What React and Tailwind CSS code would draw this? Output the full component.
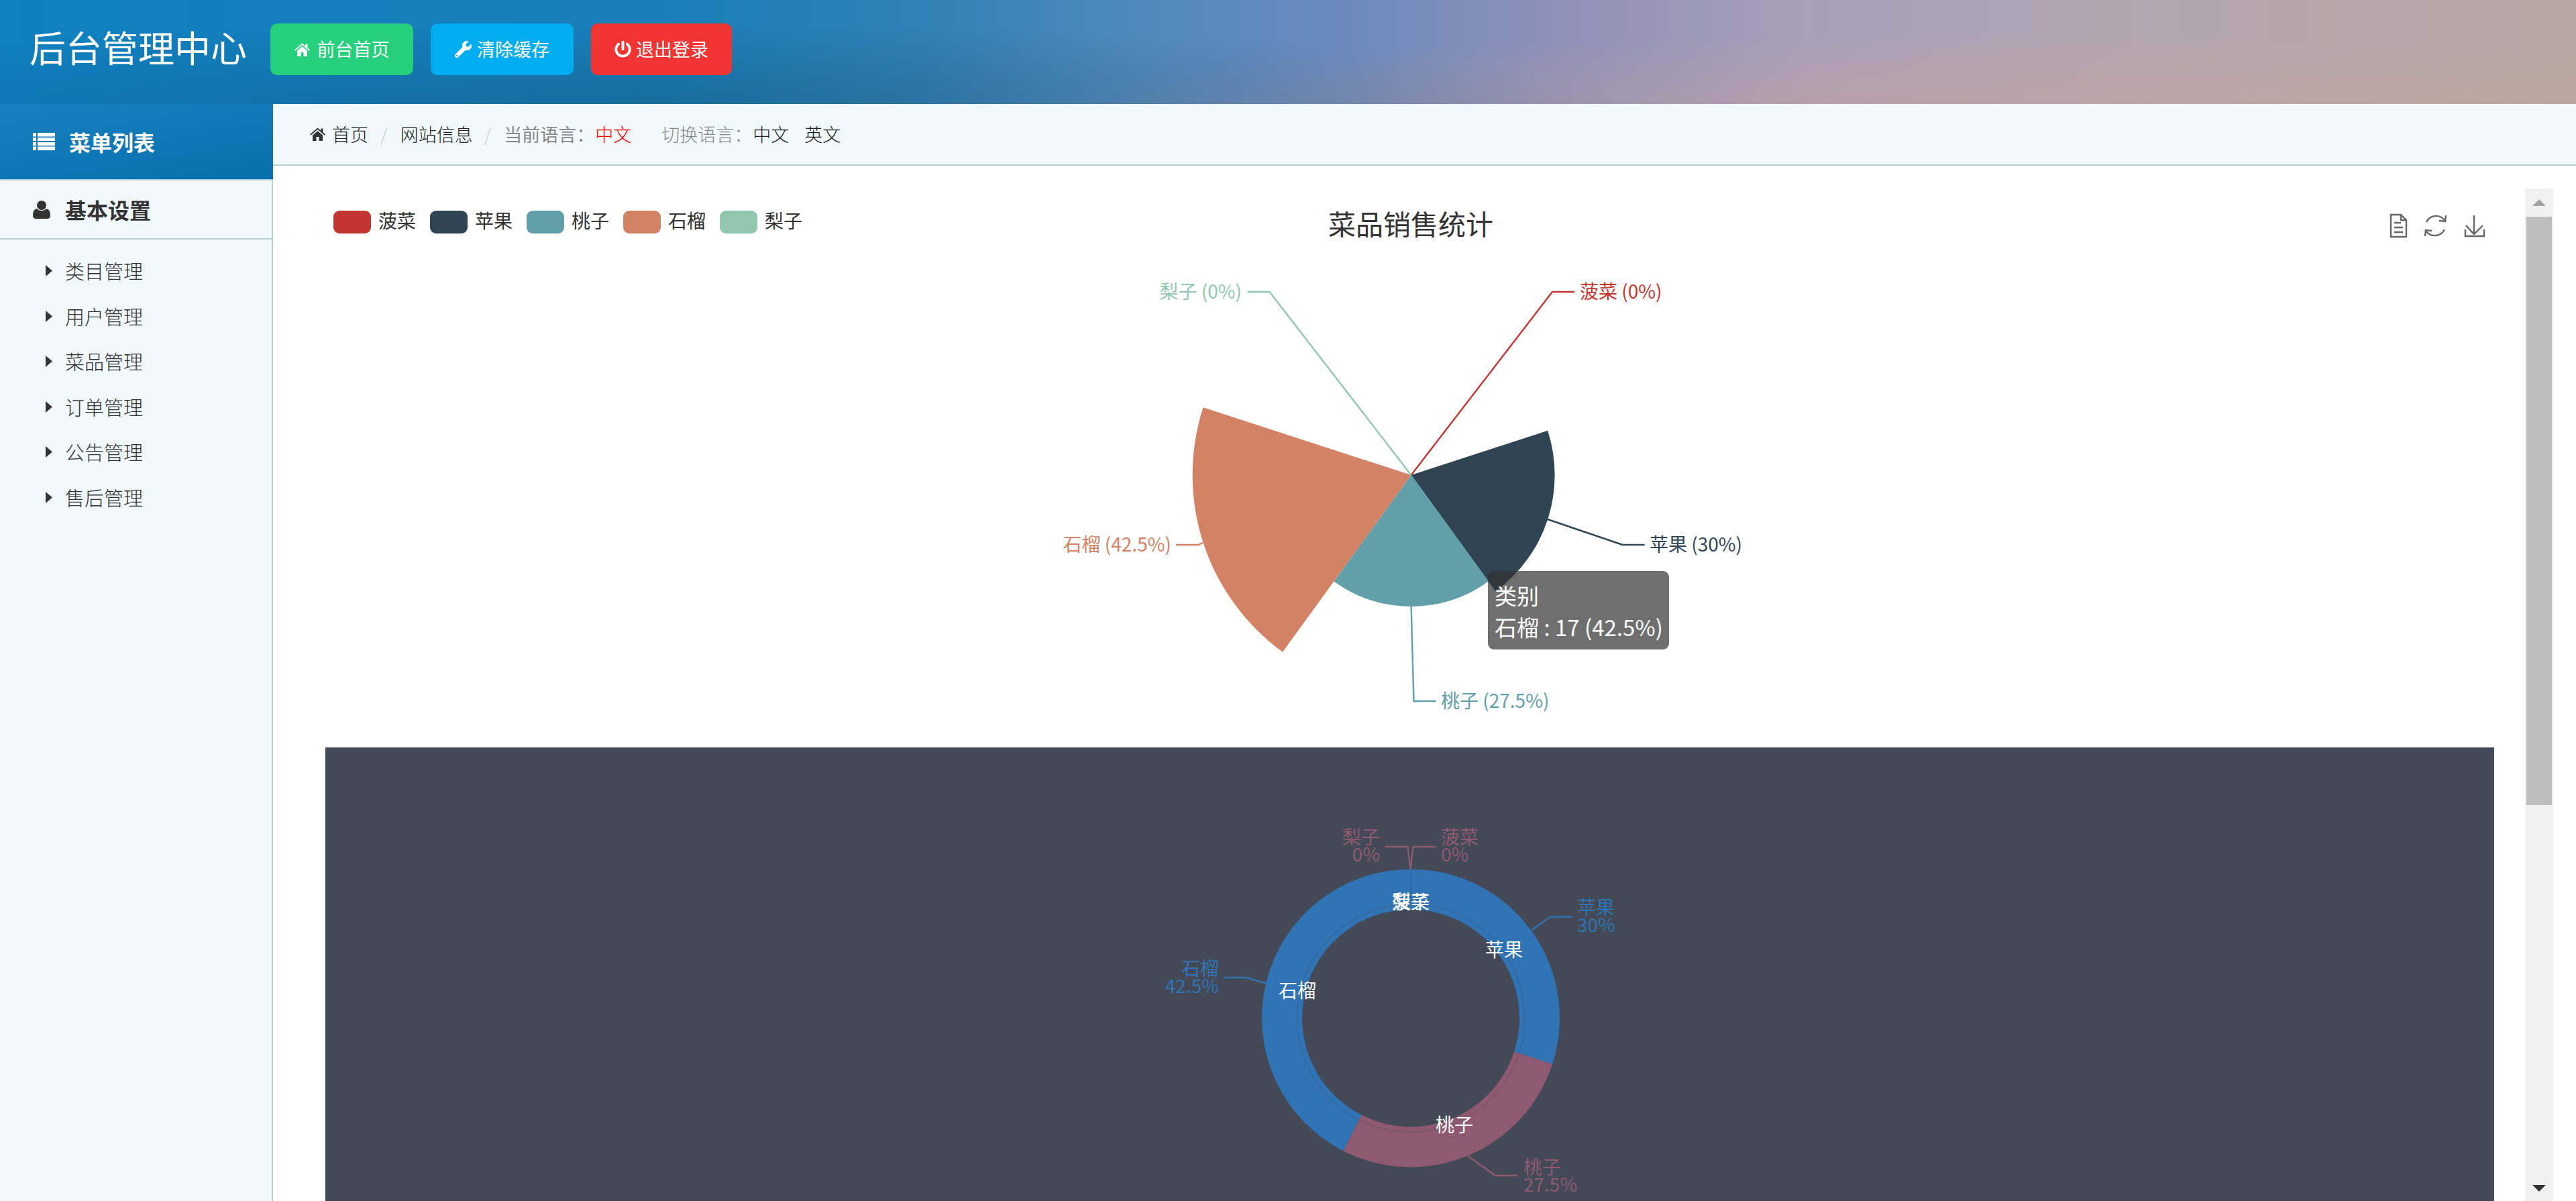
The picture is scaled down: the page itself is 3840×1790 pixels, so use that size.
import { FaWrench, FaPowerOff } from "react-icons/fa";

const polar = (cx, cy, r, deg) => {
  const a = (deg * Math.PI) / 180;
  return [cx + r * Math.sin(a), cy - r * Math.cos(a)];
};

const sector = (cx, cy, r, from, to) => {
  const [x1, y1] = polar(cx, cy, r, from);
  const [x2, y2] = polar(cx, cy, r, to);
  return `M${cx} ${cy}L${x1} ${y1}A${r} ${r} 0 0 1 ${x2} ${y2}Z`;
};

const ring = (cx, cy, r0, r1, from, to) => {
  const [x1, y1] = polar(cx, cy, r1, from);
  const [x2, y2] = polar(cx, cy, r1, to);
  const [x3, y3] = polar(cx, cy, r0, to);
  const [x4, y4] = polar(cx, cy, r0, from);
  const large = to - from > 180 ? 1 : 0;
  return `M${x1} ${y1}A${r1} ${r1} 0 ${large} 1 ${x2} ${y2}L${x3} ${y3}A${r0} ${r0} 0 ${large} 0 ${x4} ${y4}Z`;
};

const legend = [
  { name: "菠菜", color: "#c23531", x: 497 },
  { name: "苹果", color: "#2f4554", x: 641 },
  { name: "桃子", color: "#61a0a8", x: 785 },
  { name: "石榴", color: "#d48265", x: 929 },
  { name: "梨子", color: "#91c7ae", x: 1073 },
];

const roseLabels = [
  { text: "菠菜 (0%)", color: "#c23531", points: "2103.6,708 2314,435 2347,435", x: 2355, y: 433, anchor: "start" },
  { text: "苹果 (30%)", color: "#2f4554", points: "2307,774 2418.6,812 2451.6,812", x: 2459, y: 810, anchor: "start" },
  { text: "桃子 (27.5%)", color: "#61a0a8", points: "2103.6,904 2107.5,1045 2140.5,1045", x: 2148, y: 1043, anchor: "start" },
  { text: "石榴 (42.5%)", color: "#d48265", points: "1793,809 1786,812 1753,812", x: 1746, y: 810, anchor: "end" },
  { text: "梨子 (0%)", color: "#91c7ae", points: "2103.6,708 1892.5,435 1859.5,435", x: 1851, y: 433, anchor: "end" },
];

const BLUE = "#3074b5";
const MAUVE = "#8f5a71";

const donutLabels = [
  { name: "苹果", pct: "30%", color: BLUE, points: "2284,1386 2310.7,1366.6 2344,1366.6", x: 2351, y: 1351, anchor: "start" },
  { name: "桃子", pct: "27.5%", color: MAUVE, points: "2188,1722.8 2229,1752 2262,1752", x: 2271, y: 1738, anchor: "start" },
  { name: "石榴", pct: "42.5%", color: BLUE, points: "1887,1465.7 1858,1457 1825,1457", x: 1817, y: 1442, anchor: "end" },
  { name: "梨子", pct: "0%", color: MAUVE, points: "2102.5,1295.4 2098.5,1262 2064,1262", x: 2057, y: 1246, anchor: "end" },
  { name: "菠菜", pct: "0%", color: MAUVE, points: "2102.5,1295.4 2106.6,1262 2141,1262", x: 2148, y: 1246, anchor: "start" },
];

const donutInner = [
  { text: "苹果", x: 2242, y: 1414 },
  { text: "石榴", x: 1934, y: 1475 },
  { text: "桃子", x: 2168, y: 1675 },
  { text: "菠菜", x: 2103, y: 1343 },
  { text: "梨子", x: 2103, y: 1342 },
];

const menu = ["类目管理", "用户管理", "菜品管理", "订单管理", "公告管理", "售后管理"];

const RoseChart = () => (
  <svg viewBox="485 247 3233 867" className="block h-[867px] w-[3233px] font-normal">
    {legend.map((l) => (
      <g key={l.name}>
        <rect x={l.x} y="314" width="56" height="34" rx="9" fill={l.color} />
        <text x={l.x + 67} y="328" fontSize="28" fill="#333" dominantBaseline="central">
          {l.name}
        </text>
      </g>
    ))}
    <text x="2103" y="332" fontSize="41" fill="#333" textAnchor="middle" dominantBaseline="central">
      菜品销售统计
    </text>

    <g fill="none" stroke="#666" strokeWidth="2.4">
      <path d="M3564 320h15l8 8v25h-23z" />
      <path d="M3579 320v8h8" />
      <path d="M3569 332h10M3569 339h13M3569 346h13" />
      <path d="M3617 331a16 16 0 0 1 27-3M3644 342a16 16 0 0 1-27 3" />
      <path d="M3636 329l9 1 1-9M3625 344l-9-1-1 9" />
      <path d="M3688 321v28M3676 336l12 13 13-13M3675 342v10h28v-10" />
    </g>

    <path d={sector(2103.6, 708, 214, 72, 144)} fill="#2f4554" />
    <path d={sector(2103.6, 708, 196, 144, 216)} fill="#61a0a8" />
    <path d={sector(2103.6, 708, 326, 216, 288)} fill="#d48265" />
    {roseLabels.map((l) => (
      <g key={l.text}>
        <polyline points={l.points} fill="none" stroke={l.color} strokeWidth="2.4" />
        <text x={l.x} y={l.y} fontSize="28" fill={l.color} textAnchor={l.anchor} dominantBaseline="central">
          {l.text}
        </text>
      </g>
    ))}
  </svg>
);

const DonutChart = () => (
  <svg viewBox="485 1114 3233 676" className="block h-[676px] w-[3233px] font-normal">
    <path d={ring(2103, 1517.4, 162, 222, 0, 108)} fill={BLUE} />
    <path d={ring(2103, 1517.4, 162, 222, 108, 207)} fill={MAUVE} />
    <path d={ring(2103, 1517.4, 162, 222, 207, 360)} fill={BLUE} />
    <circle cx="2103" cy="1517.4" r="170" fill="none" stroke="#404a59" strokeOpacity="0.45" strokeWidth="1" />
    <line x1="2103" y1="1295.4" x2="2103" y2="1355" stroke="#404a59" strokeOpacity="0.45" strokeWidth="1" />
    {donutLabels.map((l) => (
      <g key={l.name} fontSize="28" fill={l.color} textAnchor={l.anchor} dominantBaseline="central">
        <polyline points={l.points} fill="none" stroke={l.color} strokeWidth="2.4" />
        <text x={l.x} y={l.y}>
          {l.name}
        </text>
        <text x={l.x} y={l.y + 26}>
          {l.pct}
        </text>
      </g>
    ))}
    {donutInner.map((l) => (
      <text key={l.text} x={l.x} y={l.y} fontSize="28" fill="#fff" textAnchor="middle" dominantBaseline="central">
        {l.text}
      </text>
    ))}
  </svg>
);

const HomeIcon = ({ className, fill }) => (
  <svg viewBox="0 0 23 20" className={className} fill={fill}>
    <path d="M4 11.5L11.500 5.200L19 11.500V19a1 1 0 0 1-1 1h-4.500v-6h-4v6H5a1 1 0 0 1-1-1z" />
    <path d="M0 10.200L11.500 0.500L16.500 4.700V1.500H19.500V7.200L23 10.200L21.800 11.700L11.500 3.100L1.200 11.700z" />
  </svg>
);

const ListIcon = () => (
  <svg viewBox="0 0 33 26" className="h-[26px] w-[33px]" fill="#fff">
    <path d="M0 0h5v5.500H0zM7 0h26v5.500H7zM0 7h5v5H0zM7 7h26v5H7zM0 14h5v5H0zM7 14h26v5H7zM0 20.500h5V26H0zM7 20.500h26V26H7z" />
  </svg>
);

const UserIcon = () => (
  <svg viewBox="0 0 26 27" className="h-[27px] w-[26px]" fill="#333">
    <circle cx="13" cy="7" r="7" />
    <path d="M0 22.500c0-6 1.500-9.500 5.800-10.500 2 1.900 4.400 2.900 7.200 2.900s5.200-1 7.200-2.900c4.300 1 5.800 4.500 5.800 10.500 0 2.700-1.800 4.500-4.300 4.500H4.300C1.800 27 0 25.200 0 22.500z" />
  </svg>
);

const Caret = () => (
  <svg viewBox="0 0 10 17" className="h-[17px] w-[10px]" fill="#333">
    <path d="M0 0l10 8.500L0 17z" />
  </svg>
);

const App = () => {
  return (
    <div className="flex h-[1790px] w-[3840px] flex-col overflow-hidden bg-white font-['Noto_Sans_CJK_SC',sans-serif] font-light">
      <header className="flex h-[155px] items-start bg-[radial-gradient(ellipse_1500px_140px_at_25%_110%,rgba(0,0,0,0.16),transparent),radial-gradient(ellipse_1400px_120px_at_75%_110%,rgba(225,165,130,0.28),transparent),linear-gradient(to_right,#0f80c0_0%,#1a7fb8_26%,#3182b6_36%,#4f8abc_44%,#6a8abc_52%,#8d90b8_60%,#a89fb8_70%,#b2a6b0_83%,#b6a8a2_100%)] pl-[44px] pt-[35px]">
        <h1 className="w-[359px] pt-[3px] text-[54px] leading-[64px] font-normal text-white">后台管理中心</h1>
        <div className="flex gap-[26px]">
          <a className="flex h-[77px] w-[213px] items-center justify-center gap-[11px] rounded-[10px] bg-[#25cf7c] text-[27px] font-normal text-white">
            <HomeIcon className="h-[20px] w-[23px]" fill="#fff" />
            前台首页
          </a>
          <a className="flex h-[77px] w-[213px] items-center justify-center gap-[8px] rounded-[10px] bg-[#00acf0] text-[27px] font-normal text-white">
            <FaWrench className="text-[25px]" />
            清除缓存
          </a>
          <a className="flex h-[77px] w-[210px] items-center justify-center gap-[7px] rounded-[10px] bg-[#f23433] text-[27px] font-normal text-white">
            <FaPowerOff className="text-[25px]" />
            退出登录
          </a>
        </div>
      </header>

      <div className="flex min-h-0 flex-1">
        <aside className="flex w-[407px] flex-col bg-[#f1f9fd]">
          <div className="flex h-[114px] shrink-0 items-center gap-[21px] border-b-2 border-[#b5d0da] bg-[linear-gradient(170deg,#1a80c0,#0670aa)] pl-[49px] text-[32px] font-bold text-white">
            <ListIcon />
            菜单列表
          </div>
          <div className="flex flex-1 flex-col border-r-2 border-[#b5d0da]">
            <div className="flex h-[88px] items-center gap-[22px] border-b-2 border-[#b5d0da] pl-[49px] text-[32px] font-bold text-[#333]">
              <UserIcon />
              基本设置
            </div>
            <ul className="pt-[13px]">
              {menu.map((m) => (
                <li key={m} className="flex h-[67.5px] items-center gap-[19px] pl-[68px] text-[29px] text-[#333]">
                  <Caret />
                  {m}
                </li>
              ))}
            </ul>
          </div>
        </aside>

        <main className="flex min-w-0 flex-1 flex-col">
          <nav className="flex h-[92px] shrink-0 items-center border-b-2 border-[#b5d0da] bg-[#f1f9fd] pl-[55px] text-[27px] text-[#222]">
            <HomeIcon className="mr-[10px] h-[20px] w-[23px]" fill="#333" />
            <span>首页</span>
            <span className="ml-[18px] mr-[19px] text-[#ccc]">/</span>
            <span>网站信息</span>
            <span className="ml-[17px] mr-[19px] text-[#ccc]">/</span>
            <span className="font-normal text-[#888]">当前语言：</span>
            <span className="ml-[1px] text-[#f00]">中文</span>
            <span className="ml-[45px] text-[#888]">切换语言：</span>
            <span className="ml-[1px]">中文</span>
            <span className="ml-[23px]">英文</span>
          </nav>

          <div className="flex min-h-0 flex-1">
            <section className="relative ml-[78px] w-[3233px] shrink-0">
              <RoseChart />
              <div className="bg-[#434956]">
                <DonutChart />
              </div>
              <div className="absolute left-[1733px] top-[604px] flex h-[117px] w-[270px] flex-col justify-center rounded-[9px] bg-[rgba(50,50,50,0.7)] pl-[10px] pt-[2px] text-[33px] leading-[47px] font-normal text-white">
                <span>类别</span>
                <span>石榴 : 17 (42.5%)</span>
              </div>
            </section>
            <div className="ml-[46px] mt-[34px] flex w-[42px] shrink-0 flex-col items-center bg-[#f1f1f1]">
              <div className="flex h-[42px] items-center">
                <div className="h-0 w-0 border-x-[10px] border-b-[10px] border-x-transparent border-b-[#a3a3a3]" />
              </div>
              <div className="h-[877px] w-[38px] bg-[#bdbdbd]" />
              <div className="mt-auto flex h-[24px] items-start">
                <div className="h-0 w-0 border-x-[10px] border-t-[10px] border-x-transparent border-t-[#333]" />
              </div>
            </div>
          </div>
        </main>
      </div>
    </div>
  );
};

export default App;
